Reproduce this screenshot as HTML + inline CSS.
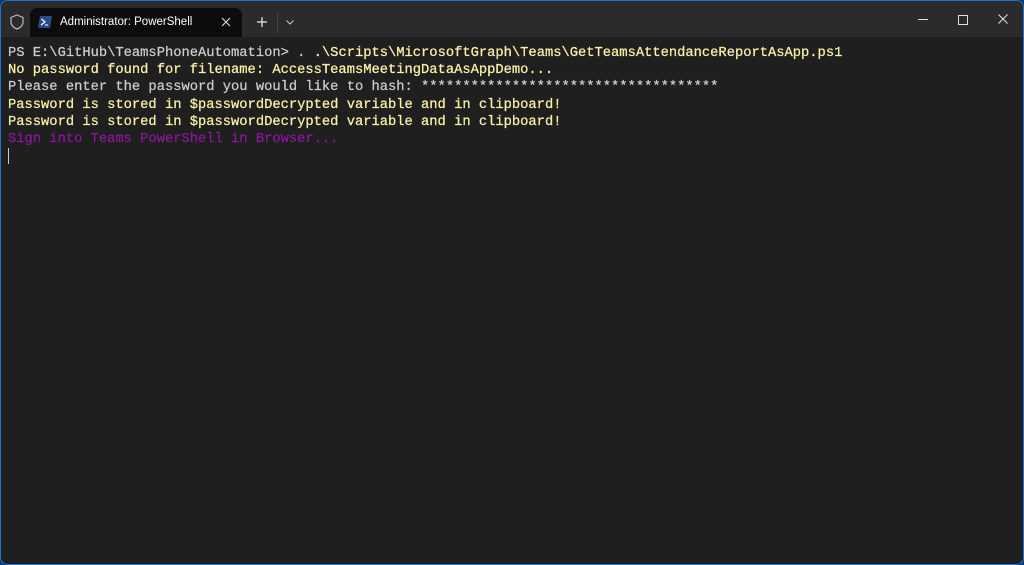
<!DOCTYPE html>
<html><head><style>
html,body{margin:0;padding:0;width:1024px;height:565px;overflow:hidden;background:#0a3d6e;}
.win{position:absolute;left:0;top:0;width:1022px;height:563px;border:1px solid #1f74c9;border-radius:8px;background:#1f1f1f;overflow:hidden;}
.tb{position:absolute;left:0;top:0;width:100%;height:36px;background:#2b2b2b;}
.tab{position:absolute;left:29px;top:7px;width:212px;height:29px;background:#0c0c0c;border-radius:7px 7px 0 0;}
.tab .t{position:absolute;left:30px;top:8px;font:11.5px "Liberation Sans",sans-serif;color:#fff;}
.term{position:absolute;left:7px;top:44px;font:13.78px/17.2px "Liberation Mono",monospace;white-space:pre;color:#cccccc;-webkit-text-stroke:0.25px currentColor;}
.y{color:#f9f1a5}.p{color:#881798}
.cur{position:absolute;left:7px;top:147px;width:1px;height:16px;background:#ccc;}
</style></head><body>
<div class="win">
<div class="tb">
<svg style="position:absolute;left:9px;top:13px" width="14" height="16" viewBox="0 0 14 16"><path d="M7 1 L13 3.5 V8 C13 11.5 10 14 7 15 C4 14 1 11.5 1 8 V3.5 Z" fill="none" stroke="#bbb" stroke-width="1.2"/></svg>
<div class="tab">
<svg style="position:absolute;left:8px;top:8px" width="14" height="12" viewBox="0 0 14 12"><path d="M2 0 H14 L12 12 H0 Z" fill="#2a4c8a"/><path d="M3.5 3 L7 6 L3 9" fill="none" stroke="#fff" stroke-width="1.2"/><path d="M7 9 H10" stroke="#fff" stroke-width="1"/></svg>
<div class="t">Administrator: PowerShell</div>
<svg style="position:absolute;left:191px;top:9px" width="10" height="10" viewBox="0 0 10 10"><path d="M1 1 L9 9 M9 1 L1 9" stroke="#ddd" stroke-width="1.1"/></svg>
</div>
<svg style="position:absolute;left:256px;top:16px" width="10" height="10" viewBox="0 0 10 10"><path d="M5 0 V10 M0 5 H10" stroke="#eee" stroke-width="1.2"/></svg>
<div style="position:absolute;left:276px;top:12px;width:1px;height:20px;background:#444"></div>
<svg style="position:absolute;left:285px;top:19px" width="8" height="5" viewBox="0 0 8 5"><path d="M0.5 0.5 L4 4 L7.5 0.5" fill="none" stroke="#ccc" stroke-width="1"/></svg>
<div style="position:absolute;left:917px;top:18px;width:10px;height:1px;background:#ddd"></div>
<div style="position:absolute;left:957px;top:14px;width:8px;height:8px;border:1px solid #ddd"></div>
<svg style="position:absolute;left:997px;top:13px" width="10" height="10" viewBox="0 0 10 10"><path d="M0.5 0.5 L9.5 9.5 M9.5 0.5 L0.5 9.5" stroke="#ddd" stroke-width="1.1"/></svg>
</div>
<div class="term">PS E:\GitHub\TeamsPhoneAutomation&gt; . <span class="y">.\Scripts\MicrosoftGraph\Teams\GetTeamsAttendanceReportAsApp.ps1</span>
<span class="y">No password found for filename: AccessTeamsMeetingDataAsAppDemo...</span>
Please enter the password you would like to hash: ************************************
<span class="y">Password is stored in $passwordDecrypted variable and in clipboard!</span>
<span class="y">Password is stored in $passwordDecrypted variable and in clipboard!</span>
<span class="p">Sign into Teams PowerShell in Browser...</span></div>
<div class="cur"></div>
</div>
</body></html>
